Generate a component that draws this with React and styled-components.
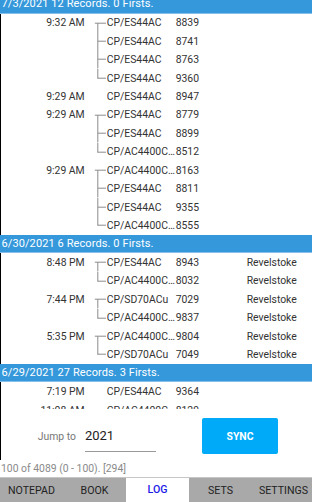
import React, { useEffect, useRef } from 'react';
import styled, { createGlobalStyle } from 'styled-components';

const GlobalStyle = createGlobalStyle`
  html, body {
    margin: 0;
    padding: 0;
    background: #fff;
  }
  body {
    font-family: Roboto, 'Liberation Sans', sans-serif;
  }
  * { box-sizing: border-box; }
`;

const Screen = styled.div`
  width: 312px;
  height: 502px;
  display: flex;
  flex-direction: column;
  overflow: hidden;
`;

const LogList = styled.div`
  height: 409px;
  flex: none;
  overflow: hidden;
`;

const DayHeader = styled.div`
  height: 18.5px;
  line-height: 17.5px;
  padding-left: 1.5px;
  background: #3598db;
  border-bottom: 1px solid #86c0ea;
  color: #fff;
  font-size: 11px;
  letter-spacing: 0.1px;
  white-space: nowrap;
`;

const Row = styled.div`
  height: 18.45px;
  display: flex;
  align-items: center;
  border-left: 1.3px solid #000;
  color: #333;
  font-size: 10.4px;
  white-space: nowrap;
`;

const Time = styled.div`
  width: 83.7px;
  text-align: right;
`;

const Tree = styled.svg`
  width: 22px;
  height: 18.45px;
  flex: none;
  display: block;
`;

const Loco = styled.div`
  width: 69px;
  overflow: hidden;
  text-overflow: ellipsis;
`;

const Number = styled.div`
  width: 71px;
`;

const Place = styled.div``;

const JumpPanel = styled.div`
  height: 51px;
  flex: none;
  display: flex;
  align-items: flex-start;
  justify-content: space-between;
  padding: 9px 34px 0 38px;
  border-left: 1.3px solid #000;
`;

const JumpGroup = styled.label`
  display: flex;
  align-items: baseline;
  gap: 9px;
  margin-top: 7px;
  margin-left: -1.3px;
`;

const JumpLabel = styled.span`
  color: #777;
  font-size: 10.4px;
`;

const JumpInput = styled.input`
  width: 71px;
  height: 27px;
  border: none;
  border-bottom: 1px solid #999;
  padding: 0 0 5px 0;
  font-family: Roboto, 'Liberation Sans', sans-serif;
  font-size: 13px;
  color: #222;
  background: transparent;
  outline: none;
`;

const SyncButton = styled.button`
  width: 76px;
  height: 36px;
  border: none;
  border-radius: 2px;
  background: #00aaf8;
  color: #fff;
  font-family: Roboto, 'Liberation Sans', sans-serif;
  font-weight: 700;
  font-size: 10.4px;
`;

const Status = styled.div`
  height: 17px;
  flex: none;
  line-height: 17px;
  padding-left: 1px;
  color: #8a8a8a;
  font-size: 10.4px;
`;

const TabBar = styled.div`
  height: 25px;
  flex: none;
  display: flex;
  background: #a9a9a9;
  border-top: 1px solid #c6c6c6;
  overflow: hidden;
`;

const Tab = styled.div`
  width: 63px;
  flex: none;
  display: flex;
  align-items: center;
  justify-content: center;
  margin-top: ${p => (p.$active ? '-1px' : '0')};
  background: ${p => (p.$active ? '#fff' : 'transparent')};
  color: ${p => (p.$active ? '#1a1ae8' : '#222')};
  font-weight: ${p => (p.$active ? 500 : 400)};
  font-size: 10.6px;
  white-space: nowrap;
`;

const R = 'Revelstoke';

const days = [
  {
    title: '7/3/2021 12 Records. 0 Firsts.',
    groups: [
      { time: '9:32 AM', locos: [['CP/ES44AC', '8839'], ['CP/ES44AC', '8741'], ['CP/ES44AC', '8763'], ['CP/ES44AC', '9360']] },
      { time: '9:29 AM', locos: [['CP/ES44AC', '8947']] },
      { time: '9:29 AM', locos: [['CP/ES44AC', '8779'], ['CP/ES44AC', '8899'], ['CP/AC4400CW', '8512']] },
      { time: '9:29 AM', locos: [['CP/AC4400CW', '8163'], ['CP/ES44AC', '8811'], ['CP/ES44AC', '9355'], ['CP/AC4400CW', '8555']] },
    ],
  },
  {
    title: '6/30/2021 6 Records. 0 Firsts.',
    groups: [
      { time: '8:48 PM', locos: [['CP/ES44AC', '8943', R], ['CP/AC4400CW', '8032', R]] },
      { time: '7:44 PM', locos: [['CP/SD70ACu', '7029', R], ['CP/AC4400CW', '9837', R]] },
      { time: '5:35 PM', locos: [['CP/AC4400CW', '9804', R], ['CP/SD70ACu', '7049', R]] },
    ],
  },
  {
    title: '6/29/2021 27 Records. 3 Firsts.',
    groups: [
      { time: '7:19 PM', locos: [['CP/ES44AC', '9364']] },
      { time: '11:08 AM', locos: [['CP/AC4400CW', '8129'], ['CP/ES44AC', '8880']] },
    ],
  },
];

// connector drawn between the time and the loco: first / mid / last / none
function Connector({ kind }) {
  const mid = 9.2;
  return (
    <Tree viewBox="0 0 22 18.45">
      {kind !== 'none' && (
        <g stroke="#8c8c8c" strokeWidth="1" fill="none">
          {kind === 'first' && <line x1="9.8" y1={mid} x2="21" y2={mid} />}
          {kind !== 'first' && <line x1="12.8" y1={mid} x2="21" y2={mid} />}
          <line
            x1="12.8"
            x2="12.8"
            y1={kind === 'first' ? mid : 0}
            y2={kind === 'last' ? mid + 0.5 : 18.45}
          />
        </g>
      )}
    </Tree>
  );
}

function kindOf(i, n) {
  if (n === 1) return 'none';
  if (i === 0) return 'first';
  if (i === n - 1) return 'last';
  return 'mid';
}

const tabs = ['NOTEPAD', 'BOOK', 'LOG', 'SETS', 'SETTINGS'];

export default function App() {
  const listRef = useRef(null);

  useEffect(() => {
    if (listRef.current) listRef.current.scrollTop = 4.5;
  }, []);

  return (
    <>
      <GlobalStyle />
      <Screen>
        <LogList ref={listRef}>
          {days.map(day => (
            <div key={day.title}>
              <DayHeader>{day.title}</DayHeader>
              {day.groups.map((g, gi) =>
                g.locos.map(([loco, num, place], i) => (
                  <Row key={`${gi}-${i}`}>
                    <Time>{i === 0 ? g.time : ''}</Time>
                    <Connector kind={kindOf(i, g.locos.length)} />
                    <Loco>{loco}</Loco>
                    <Number>{num}</Number>
                    {place && <Place>{place}</Place>}
                  </Row>
                ))
              )}
            </div>
          ))}
        </LogList>
        <JumpPanel>
          <JumpGroup>
            <JumpLabel>Jump to</JumpLabel>
            <JumpInput defaultValue="2021" />
          </JumpGroup>
          <SyncButton>SYNC</SyncButton>
        </JumpPanel>
        <Status>100 of 4089 (0 - 100). [294]</Status>
        <TabBar>
          {tabs.map(t => (
            <Tab key={t} $active={t === 'LOG'}>{t}</Tab>
          ))}
        </TabBar>
      </Screen>
    </>
  );
}
